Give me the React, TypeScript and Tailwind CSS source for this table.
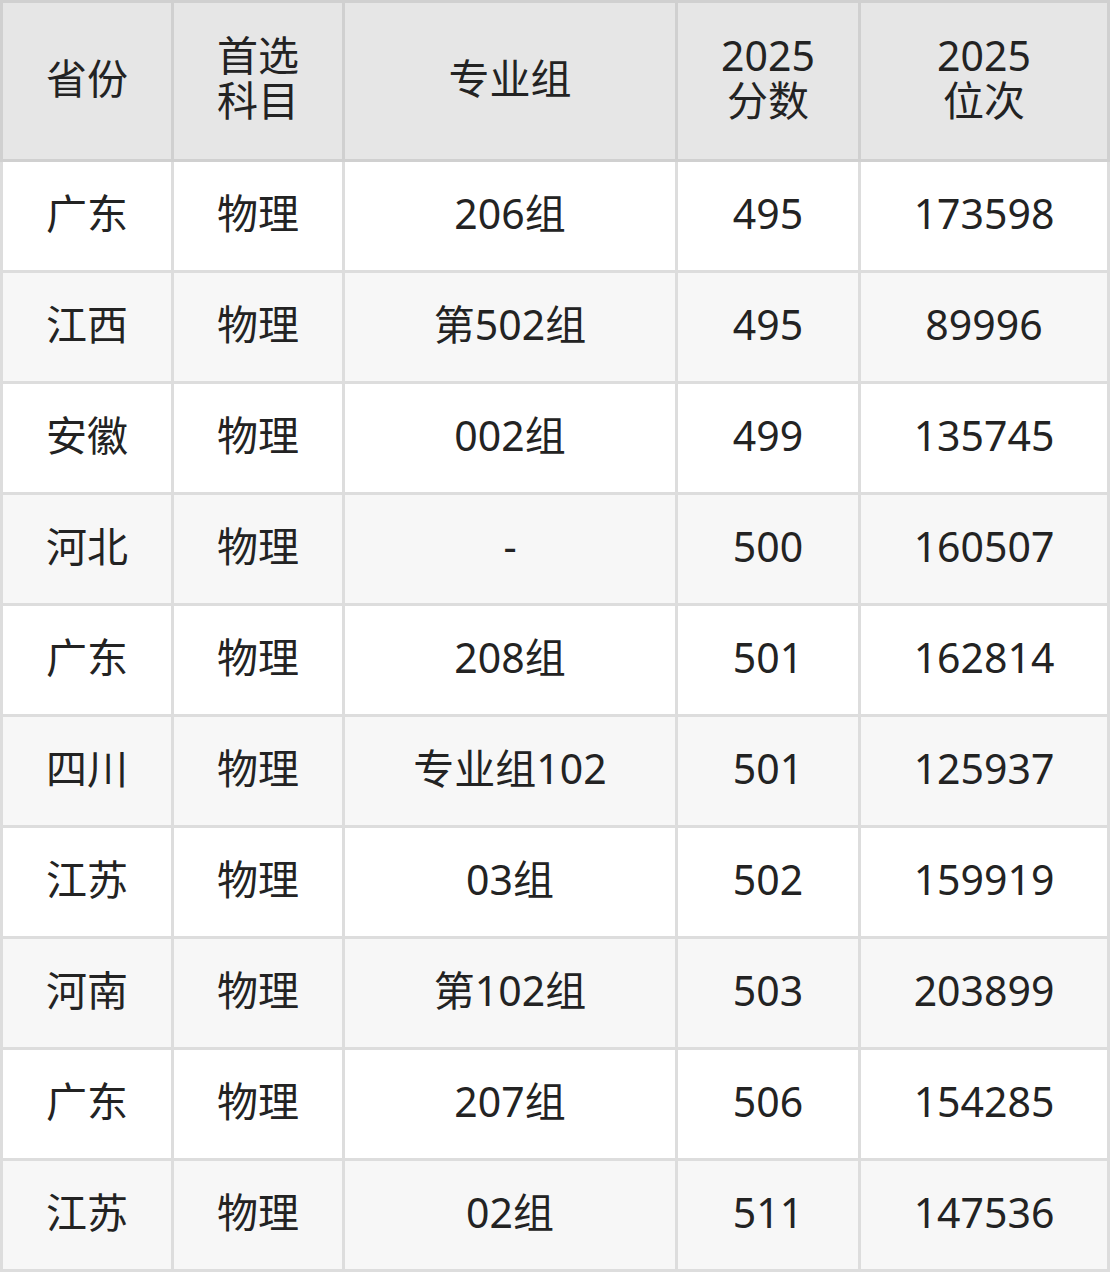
import React from "react";

const header: string[][] = [["省份"], ["首选", "科目"], ["专业组"], ["2025", "分数"], ["2025", "位次"]];

const rows: string[][] = [
  ["广东", "物理", "206组", "495", "173598"],
  ["江西", "物理", "第502组", "495", "89996"],
  ["安徽", "物理", "002组", "499", "135745"],
  ["河北", "物理", "-", "500", "160507"],
  ["广东", "物理", "208组", "501", "162814"],
  ["四川", "物理", "专业组102", "501", "125937"],
  ["江苏", "物理", "03组", "502", "159919"],
  ["河南", "物理", "第102组", "503", "203899"],
  ["广东", "物理", "207组", "506", "154285"],
  ["江苏", "物理", "02组", "511", "147536"],
];

export default function App() {
  return (
    <div
      className="w-[1110px] text-[#232323] text-[41px]"
      style={{ fontFamily: '"Noto Sans", "Noto Sans CJK SC", sans-serif' }}
    >
      <div className="grid grid-cols-[174px_171px_333px_183px_249px] h-[162px] bg-[#e6e6e6]">
        {header.map((lines, i) => (
          <div
            key={i}
            className={`flex flex-col items-center justify-center pb-[6px] border-t-[3px] border-b-[3px] border-r-[3px] border-[#d0d0d0] leading-[45px] ${i === 0 ? "border-l-[3px]" : ""}`}
          >
            {lines.map((l, j) => (
              <span key={j}>{l}</span>
            ))}
          </div>
        ))}
      </div>
      {rows.map((r, ri) => (
        <div
          key={ri}
          className={`grid grid-cols-[174px_171px_333px_183px_249px] h-[111px] ${ri % 2 === 1 ? "bg-[#f7f7f7]" : "bg-white"}`}
        >
          {r.map((c, ci) => (
            <div
              key={ci}
              className={`flex items-center justify-center pb-[6px] border-b-[3px] border-r-[3px] border-[#dddddd] leading-none ${ci === 0 ? "border-l-[3px]" : ""}`}
            >
              {c}
            </div>
          ))}
        </div>
      ))}
    </div>
  );
}
